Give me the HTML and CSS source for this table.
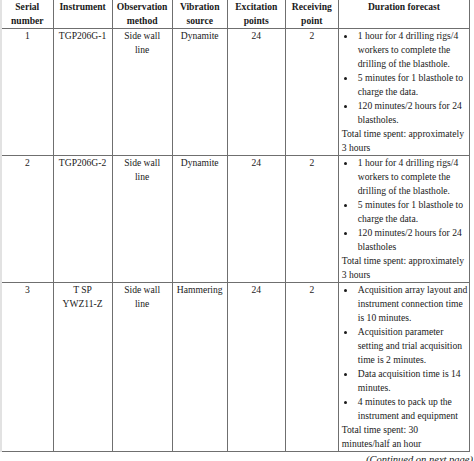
FILE: index.html
```html
<!DOCTYPE html>
<html>
<head>
<meta charset="utf-8">
<link rel="stylesheet" href="styles.css">
</head>
<body>
<table class="tbl">
  <colgroup>
    <col class="c1"><col class="c2"><col class="c3"><col class="c4"><col class="c5"><col class="c6"><col class="c7">
  </colgroup>
  <thead>
    <tr>
      <th>Serial<br>number</th>
      <th>Instrument</th>
      <th>Observation<br>method</th>
      <th>Vibration<br>source</th>
      <th>Excitation<br>points</th>
      <th>Receiving<br>point</th>
      <th>Duration forecast</th>
    </tr>
  </thead>
  <tbody>
    <tr>
      <td>1</td>
      <td>TGP206G-1</td>
      <td>Side wall<br>line</td>
      <td>Dynamite</td>
      <td>24</td>
      <td>2</td>
      <td class="dur">
        <ul class="bl">
          <li>1 hour for 4 drilling rigs/4<br>workers to complete the<br>drilling of the blasthole.</li>
          <li>5 minutes for 1 blasthole to<br>charge the data.</li>
          <li>120 minutes/2 hours for 24<br>blastholes.</li>
        </ul>
        <div class="tot">Total time spent: approximately<br>3 hours</div>
      </td>
    </tr>
    <tr>
      <td>2</td>
      <td>TGP206G-2</td>
      <td>Side wall<br>line</td>
      <td>Dynamite</td>
      <td>24</td>
      <td>2</td>
      <td class="dur">
        <ul class="bl">
          <li>1 hour for 4 drilling rigs/4<br>workers to complete the<br>drilling of the blasthole.</li>
          <li>5 minutes for 1 blasthole to<br>charge the data.</li>
          <li>120 minutes/2 hours for 24<br>blastholes</li>
        </ul>
        <div class="tot">Total time spent: approximately<br>3 hours</div>
      </td>
    </tr>
    <tr class="last">
      <td>3</td>
      <td>T SP<br>YWZ11-Z</td>
      <td>Side wall<br>line</td>
      <td>Hammering</td>
      <td>24</td>
      <td>2</td>
      <td class="dur">
        <ul class="bl">
          <li>Acquisition array layout and<br>instrument connection time<br>is 10 minutes.</li>
          <li>Acquisition parameter<br>setting and trial acquisition<br>time is 2 minutes.</li>
          <li>Data acquisition time is 14<br>minutes.</li>
          <li>4 minutes to pack up the<br>instrument and equipment</li>
        </ul>
        <div class="tot">Total time spent: 30<br>minutes/half an hour</div>
      </td>
    </tr>
  </tbody>
</table>
<div class="cont">(Continued on next page)</div>
</body>
</html>
```
FILE: styles.css
```css
html, body {
  margin: 0;
  padding: 0;
  background: #ffffff;
  overflow: hidden;
}
body {
  width: 474px;
  height: 461px;
  font-family: "Liberation Serif", "Times New Roman", serif;
  font-size: 9.6px;
  line-height: 14px;
  color: #1a1a1a;
}
.tbl {
  border-collapse: collapse;
  table-layout: fixed;
  width: 470px;
  border-left: 2px solid #e2e2e2;
}
.c1 { width: 52px; }
.c2 { width: 59px; }
.c3 { width: 60px; }
.c4 { width: 55px; }
.c5 { width: 58px; }
.c6 { width: 53px; }
.c7 { width: 131px; }
.tbl th, .tbl td {
  border: 1px solid #6f6f6f;
  padding: 0 1px;
  vertical-align: top;
  text-align: center;
  font-weight: normal;
  white-space: nowrap;
}
.tbl th {
  font-weight: bold;
  border-top: none;
  height: 28px;
}
.tbl th:first-child, .tbl td:first-child {
  border-left: none;
}
.tbl td.dur {
  text-align: left;
  padding: 0 1px 0 3px;
}
.bl {
  list-style: none;
  margin: 0;
  padding: 0;
}
.bl li {
  position: relative;
  padding-left: 16px;
}
.bl li::before {
  content: "";
  position: absolute;
  left: 2px;
  top: 6px;
  width: 3px;
  height: 3px;
  border-radius: 50%;
  background: #1a1a1a;
}
.cont {
  font-style: italic;
  white-space: nowrap;
  padding-left: 366px;
  font-size: 10.5px;
  line-height: 14px;
  margin-top: 1px;
}
```
